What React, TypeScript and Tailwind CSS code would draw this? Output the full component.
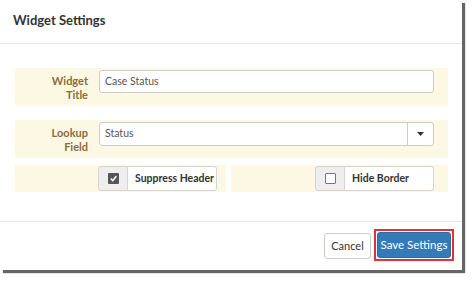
import React from "react";

const font = { fontFamily: 'Lato, "Noto Sans", sans-serif' };

const FieldRow = ({
  label,
  children,
  className,
}: {
  label: string[];
  children: React.ReactNode;
  className?: string;
}) => (
  <div className={`flex bg-[#fcf8e3] rounded-[2px] ${className ?? ""}`}>
    <div className="w-[77px] pr-[4px] pt-[6px] pb-[4px] text-right text-[11px] font-bold leading-[14px] text-[#8a6d3b]">
      {label.map((l) => (
        <div key={l}>{l}</div>
      ))}
    </div>
    <div className="flex-1 pl-[7px] pr-[14px] pt-[2px]">{children}</div>
  </div>
);

const CheckGroup = ({ label, checked }: { label: string; checked?: boolean }) => (
  <div className="flex h-[25px]">
    <div className="w-[30px] flex items-center justify-center bg-[#eeeeee] border border-[#d4d4d4] rounded-l-[3px]">
      {checked ? (
        <div className="w-[11px] h-[11px] bg-[#555] rounded-[1px] flex items-center justify-center">
          <svg width="9" height="9" viewBox="0 0 10 10">
            <path d="M2 5.2 L4.2 7.3 L8.2 2.6" stroke="#fff" strokeWidth="1.8" fill="none" />
          </svg>
        </div>
      ) : (
        <div className="w-[11px] h-[11px] bg-white border border-[#777] rounded-[1px]" />
      )}
    </div>
    <div className="w-[89px] flex items-center pl-[7px] bg-white border border-l-0 border-[#d4d4d4] rounded-r-[3px] text-[10.5px] font-bold text-[#333] whitespace-nowrap">
      {label}
    </div>
  </div>
);

export default function App() {
  return (
    <div className="w-[474px] h-[283px] bg-white" style={font}>
      <div className="w-[462px] h-[270px] bg-white flex flex-col shadow-[3px_3px_1px_rgba(0,0,0,0.6)]">
        <div className="h-[44px] border-b border-[#e5e5e5] px-[13px] flex items-center">
          <h4 className="text-[13px] font-bold text-[#333] pb-[1px]">Widget Settings</h4>
        </div>

        <div className="flex-1 px-[15px] pt-[24px] pr-[14px]">
          <FieldRow label={["Widget", "Title"]}>
            <div className="h-[23px] border border-[#ccc] rounded-[3px] bg-white flex items-center px-[5px] text-[10.5px] text-[#555]">
              Case Status
            </div>
          </FieldRow>

          <FieldRow label={["Lookup", "Field"]} className="mt-[14px]">
            <div className="h-[24px] border border-[#ccc] rounded-[3px] bg-white flex text-[10.5px] text-[#555]">
              <div className="flex-1 flex items-center px-[5px]">Status</div>
              <div className="w-[26px] border-l border-[#ccc] flex items-center justify-center">
                <svg width="7" height="4" viewBox="0 0 7 4">
                  <path d="M0 0 H7 L3.5 4 Z" fill="#333" />
                </svg>
              </div>
            </div>
          </FieldRow>

          <div className="flex mt-[7px] gap-[5px]">
            <div className="w-[211px] h-[27px] bg-[#fcf8e3] flex items-center pl-[83px]">
              <CheckGroup label="Suppress Header" checked />
            </div>
            <div className="flex-1 h-[27px] bg-[#fcf8e3] flex items-center justify-end pr-[14px]">
              <CheckGroup label="Hide Border" />
            </div>
          </div>
        </div>

        <div className="h-[49px] border-t border-[#e5e5e5] flex items-start justify-end pt-[7px] pr-[8px] gap-[3px]">
          <button className="mt-[4px] h-[26px] w-[47px] border border-[#ccc] rounded-[3px] bg-white text-[11px] text-[#333]">
            Cancel
          </button>
          <div className="border-2 border-[#e0323c] p-[1px]">
            <button className="block h-[26px] w-[74px] border border-[#2e6da4] rounded-[3px] bg-[#337ab7] text-[11.5px] text-white">
              Save Settings
            </button>
          </div>
        </div>
      </div>
    </div>
  );
}
